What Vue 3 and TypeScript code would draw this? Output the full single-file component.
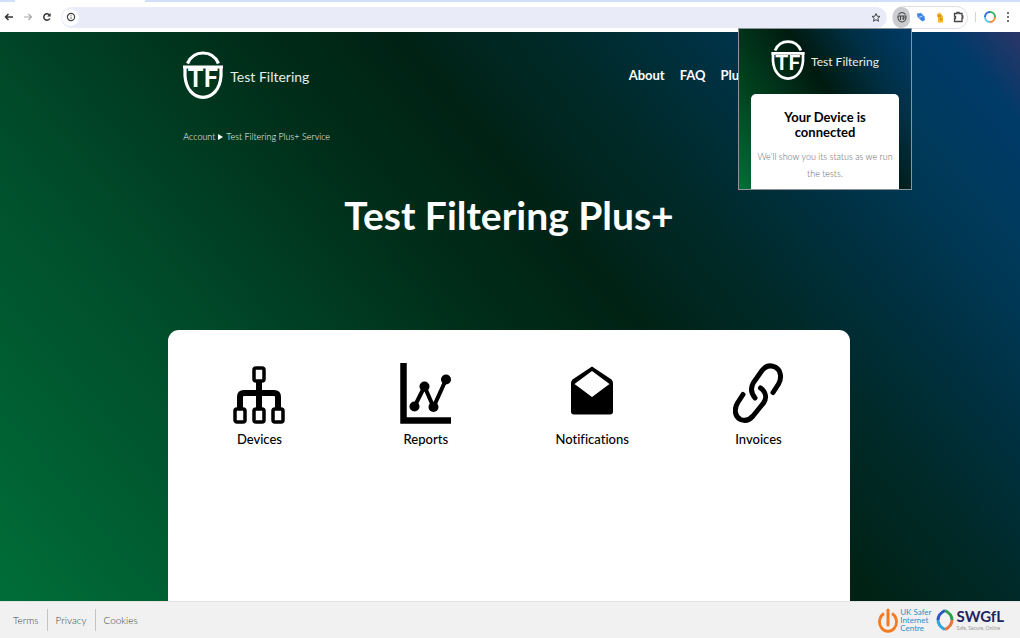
<script setup lang="ts">
interface Feature {
  id: 'devices' | 'reports' | 'notifications' | 'invoices'
  label: string
}

const navLinks: string[] = ['About', 'FAQ', 'Plus+']
const footerLinks: string[] = ['Terms', 'Privacy', 'Cookies']
const features: Feature[] = [
  { id: 'devices', label: 'Devices' },
  { id: 'reports', label: 'Reports' },
  { id: 'notifications', label: 'Notifications' },
  { id: 'invoices', label: 'Invoices' },
]
</script>

<template>
  <div class="window">
    <div class="chrome">
      <div class="tabstrip"><div class="tab"></div></div>
      <div class="toolbar">
        <button class="tool" aria-label="Back">
          <svg width="10" height="10" viewBox="0 0 10 10"><path d="M9 5H2M4.5 2 1.5 5l3 3" fill="none" stroke="#333" stroke-width="1.5" /></svg>
        </button>
        <button class="tool" aria-label="Forward">
          <svg width="10" height="10" viewBox="0 0 10 10"><path d="M1 5h7M5.500 2l3 3-3 3" fill="none" stroke="#aaa" stroke-width="1.2" /></svg>
        </button>
        <button class="tool" aria-label="Reload">
          <svg width="10" height="10" viewBox="0 0 10 10"><path d="M7.800 6.500A3.200 3.200 0 1 1 7.500 3" fill="none" stroke="#333" stroke-width="1.500" /><path d="M8.600 1v3.400H5.200z" fill="#333" /></svg>
        </button>
        <div class="omnibox">
          <button class="site" aria-label="Site information">
            <svg width="10" height="10" viewBox="0 0 10 10"><circle cx="5" cy="5" r="3.600" fill="none" stroke="#444" stroke-width="1.200" /><path d="M5 4.500v2.500M5 2.800v1" stroke="#777" stroke-width="1" /></svg>
          </button>
          <input class="address" type="text" aria-label="Address" />
          <button class="tool" aria-label="Bookmark">
            <svg width="10" height="11" viewBox="0 0 10 11"><path d="M5 1.500 6.100 4.200 9 4.400 6.800 6.300 7.500 9.300 5 7.700 2.500 9.300 3.200 6.300 1 4.400 3.900 4.200z" fill="none" stroke="#444" stroke-width="1" /></svg>
          </button>
        </div>
        <div class="extensions">
          <button class="ext active" aria-label="Test Filtering extension">
            <svg width="10" height="12" viewBox="0 0 10 12"><path d="M1.500 3.500Q5-.5 8.500 3.500M.5 5h9M1 5v2Q1.500 10.500 5 11 8.500 10.500 9 7V5M3.500 5v4M6.200 9V5M6.200 7h2" fill="none" stroke="#444" stroke-width="1.100" /></svg>
          </button>
          <button class="ext" aria-label="Tag extension">
            <svg width="10" height="10" viewBox="0 0 10 10"><path d="M1 1.500 5 1l3.500 3.500L9 8 6.500 9.500 4 7.500 1.500 5z" fill="#3d86e8" /><path d="M3 5.500 6.500 4" stroke="#bfd8fb" stroke-width="1" /></svg>
          </button>
          <button class="ext" aria-label="Yellow extension">
            <svg width="10" height="11" viewBox="0 0 10 11"><path d="M2 4V2l3-1.500L7 3l1 1v6.500H3V6z" fill="#f5b52c" /><path d="M3 4h3M5 7h2" stroke="#a8741a" stroke-width="1" /></svg>
          </button>
          <button class="ext" aria-label="Extensions">
            <svg width="11" height="12" viewBox="0 0 11 12"><path d="M1.500 2.500h2.500V1.500h2v1h3V5h.8v2H9v3.500H1.500V7.500h1v-2h-1z" fill="none" stroke="#444" stroke-width="1.300" /></svg>
          </button>
        </div>
        <span class="divider"></span>
        <button class="tool profile" aria-label="Profile">
          <svg width="14" height="14" viewBox="0 0 14 14"><g fill="none" stroke-width="2"><path d="M7 2A5 5 0 0 0 2 7" stroke="#2a6fd6" /><path d="M2 7a5 5 0 0 0 5 5" stroke="#55c8ea" /><path d="M7 12a5 5 0 0 0 5-5" stroke="#f08a3c" /><path d="M12 7A5 5 0 0 0 7 2" stroke="#37b35a" /></g></svg>
        </button>
        <button class="tool" aria-label="Menu">
          <svg width="4" height="12" viewBox="0 0 4 12" fill="#444"><circle cx="2" cy="2" r="1" /><circle cx="2" cy="6" r="1" /><circle cx="2" cy="10" r="1" /></svg>
        </button>
      </div>
    </div>

    <section class="popup" aria-label="Device status">
      <div class="popup-brand">
        <svg class="popup-mark" viewBox="0 0 40 48">
          <path d="M4.500 12.500Q9 2 20 2t15.500 10.500" fill="none" stroke="#fff" stroke-width="3.200" />
          <path d="M0 16h40M2 16v9C3 38 10 46 20 46.300 30 46 37 38 38 25V16" fill="none" stroke="#fff" stroke-width="3.200" />
          <text x="20" y="35.500" text-anchor="middle" class="monogram">TF</text>
        </svg>
        <span>Test Filtering</span>
      </div>
      <div class="popup-card">
        <h2>Your Device is connected</h2>
        <p>We'll show you its status as we run the tests.</p>
      </div>
    </section>

    <main class="page">
      <div class="container">
        <header class="header">
          <a class="brand" href="#">
            <svg class="mark" viewBox="0 0 40 48">
              <path d="M4.500 12.500Q9 2 20 2t15.500 10.500" fill="none" stroke="#fff" stroke-width="3.200" />
              <path d="M0 16h40M2 16v9C3 38 10 46 20 46.300 30 46 37 38 38 25V16" fill="none" stroke="#fff" stroke-width="3.200" />
              <text x="20" y="35.500" text-anchor="middle" class="monogram">TF</text>
            </svg>
            <span>Test Filtering</span>
          </a>
          <nav class="nav">
            <a v-for="link in navLinks" :key="link" href="#">{{ link }}</a>
          </nav>
        </header>
        <nav class="crumbs" aria-label="Breadcrumb">
          <a href="#">Account</a>
          <svg width="5" height="6" viewBox="0 0 5 6"><path d="M0 0 5 3 0 6z" fill="#fff" /></svg>
          <a href="#">Test Filtering Plus+ Service</a>
        </nav>
        <h1>Test Filtering Plus+</h1>
        <div class="card">
          <a v-for="f in features" :key="f.id" class="feature" href="#">
            <svg width="52" height="64" viewBox="0 0 52 64">
              <g v-if="f.id === 'devices'" fill="none" stroke="#000">
                <path d="M26 18v30M7 47V35q0-4 4-4h30q4 0 4 4v12" stroke-width="6" />
                <g fill="#fff" stroke-width="3.500">
                  <rect x="21" y="6" width="10" height="13" rx="2" />
                  <rect x="2" y="47" width="10" height="13" rx="2" />
                  <rect x="21" y="47" width="10" height="13" rx="2" />
                  <rect x="40" y="47" width="10" height="13" rx="2" />
                </g>
              </g>
              <g v-else-if="f.id === 'reports'">
                <path d="M3.500 1v57.500H51" fill="none" stroke="#000" stroke-width="6.500" />
                <path d="M14.500 44.500l10-20 9 20.500L46 17.500" fill="none" stroke="#000" stroke-width="4" />
                <circle cx="14.500" cy="44.500" r="5" /><circle cx="24.500" cy="24.500" r="5" />
                <circle cx="33.500" cy="45" r="5" /><circle cx="46" cy="17.500" r="5" />
              </g>
              <path v-else-if="f.id === 'notifications'" fill-rule="evenodd" d="M26 4.500 45.500 17.500Q47 19 47 21V49.500Q47 52.500 44 52.500H8Q5 52.500 5 49.500V21Q5 19 6.500 17.500zM26 9 8.500 22 26 35 43.500 22z" />
              <g v-else fill="none" stroke="#000" stroke-width="5" stroke-linecap="round">
                <path d="M40 30.500 45.500 22C49 16 48 8.500 42.500 5.200 37 2.500 32.500 4 29 8.500L20.500 20.500C17.500 25.500 18 31 22 36" />
                <path d="M10 32.500 4.500 41C1 47 1.500 54.500 7.500 57.500 12.500 59.500 16.500 58 20 54L30.500 41C34 36 33 30 27.500 26" />
              </g>
            </svg>
            <span>{{ f.label }}</span>
          </a>
        </div>
      </div>
    </main>

    <footer class="footer">
      <nav class="legal">
        <a v-for="link in footerLinks" :key="link" href="#">{{ link }}</a>
      </nav>
      <div class="partners">
        <a class="partner" href="#">
          <svg width="20" height="28" viewBox="0 0 20 28"><path d="M6 7.500A8.500 9.500 0 1 0 14 7.500" fill="none" stroke="#f47b20" stroke-width="2.800" /><path d="M10 4v15" stroke="#f47b20" stroke-width="3" stroke-linecap="round" /></svg>
          <span class="uksic">UK Safer<br />Internet<br />Centre</span>
        </a>
        <a class="partner" href="#">
          <svg width="18" height="24" viewBox="0 0 18 24"><g fill="none" stroke-width="3"><path d="M9 2.500Q2 6 2 12" stroke="#2a57c8" /><path d="M2 12q0 6 7 9.500" stroke="#2aa6e0" /><path d="M9 21.500q7-3.500 7-9.500" stroke="#e8763a" /><path d="M16 12q0-6-7-9.500" stroke="#2f9e54" /></g></svg>
          <span class="swgfl"><strong>SWGfL</strong><small>Safe, Secure, Online</small></span>
        </a>
      </div>
    </footer>
  </div>
</template>

<style>
body {
  margin: 0;
}
</style>

<style scoped>
.window {
  position: relative;
  display: flex;
  flex-direction: column;
  min-height: 100vh;
  font-family: Lato, "Noto Sans", sans-serif;
  font-variant-ligatures: none;
  color: #000;
}
a {
  color: inherit;
  text-decoration: none;
}
svg {
  display: block;
  flex: none;
}
button {
  border: 0;
  padding: 0;
  background: none;
}
.tabstrip {
  height: 2px;
  padding-left: 15px;
  background: #d0e0fb;
}
.tab {
  width: 130px;
  height: 2px;
  background: #fff;
}
.toolbar {
  display: flex;
  align-items: center;
  height: 30px;
  padding: 0 10px 0 4px;
  gap: 9px;
  background: #fff;
}
.omnibox {
  flex: 1;
  display: flex;
  align-items: center;
  height: 21px;
  padding: 0 6px 0 1px;
  border-radius: 11px;
  background: #e9ecf8;
}
.site {
  display: grid;
  place-items: center;
  width: 17px;
  height: 17px;
  border-radius: 50%;
  background: #fff;
}
.address {
  flex: 1;
  min-width: 0;
  border: 0;
  background: none;
}
.extensions {
  display: flex;
  align-items: center;
  gap: 2px;
  height: 21px;
  margin-left: -4px;
  border: 1px solid #dcdfe6;
  border-radius: 12px;
}
.ext {
  display: grid;
  place-items: center;
  width: 17px;
  height: 20px;
}
.active {
  height: 21px;
  border-radius: 9px;
  background: #cbcccf;
}
.divider {
  width: 1px;
  height: 10px;
  margin: 0 -2px;
  background: #c5d8f5;
}
.popup {
  position: absolute;
  top: 28px;
  right: 108px;
  display: flex;
  flex-direction: column;
  box-sizing: border-box;
  width: 174px;
  height: 162px;
  padding: 11px 12px 0;
  border: 1px solid #8c9498;
  background: linear-gradient(58deg, #007038 0%, #00431f 25%, #001a10 55%, #003046 78%, #003a68 100%);
}
.popup-brand {
  display: flex;
  align-items: center;
  justify-content: center;
  gap: 6px;
  margin-bottom: 14px;
  color: #e8eef0;
  font-size: 12px;
  line-height: 16px;
}
.popup-brand span {
  padding-top: 4px;
}
.popup-mark {
  width: 34px;
  height: 40px;
}
.monogram {
  font: 700 26px Lato, sans-serif;
  fill: #fff;
}
.popup-card {
  flex: 1;
  padding: 16px 6px 0;
  border-radius: 5px 5px 0 0;
  background: #fff;
  text-align: center;
}
.popup-card h2 {
  margin: 0 16px 8px;
  font-size: 13px;
  line-height: 15px;
  font-weight: 700;
}
.popup-card p {
  margin: 0;
  color: #666;
  font-size: 9px;
  line-height: 17px;
  font-weight: 300;
}
.page {
  flex: 1;
  display: flex;
  background: linear-gradient(50deg, #006e38 0%, #005c31 14%, #004e2b 26%, #003f24 36%, #002e1a 47%, #002214 58%, #002a2a 69%, #003348 80%, #003a5c 88%, #003a68 95%, #2b3668 100%);
}
.container {
  flex: 1;
  display: flex;
  flex-direction: column;
  margin: 0 16.700% 0 16.500%;
}
.header {
  display: flex;
  align-items: center;
  justify-content: space-between;
  padding: 19px 15px 0 15px;
}
.brand {
  display: flex;
  align-items: center;
  gap: 7px;
  padding: 0;
  color: #e8eeea;
  font-size: 14px;
  line-height: 20px;
}
.brand span {
  padding-top: 4px;
}
.mark {
  width: 40px;
  height: 48px;
}
.nav {
  display: flex;
  gap: 15px;
  width: 206px;
  color: #fff;
  font-size: 13px;
  line-height: 18px;
  font-weight: 700;
}
.crumbs {
  display: flex;
  align-items: center;
  gap: 3px;
  padding: 31px 15px 0;
  color: #fff;
  font-size: 9px;
  line-height: 14px;
  font-weight: 300;
}
h1 {
  margin: 45px 0 89px;
  color: #fff;
  font-size: 39px;
  line-height: 52px;
  font-weight: 700;
  text-align: center;
}
.card {
  flex: 1;
  display: grid;
  grid-template-columns: repeat(4, 1fr);
  align-items: start;
  padding: 32px 8px 0;
  border-radius: 11px 11px 0 0;
  background: #fff;
}
.feature {
  display: flex;
  flex-direction: column;
  align-items: center;
  gap: 4px;
  font-size: 13px;
  line-height: 18px;
  font-weight: 500;
}
.footer {
  display: flex;
  align-items: center;
  justify-content: space-between;
  min-height: 36px;
  padding: 0 16px 0 13px;
  border-top: 1px solid #e2e2e2;
  background: #f1f1f1;
}
.legal {
  display: flex;
  color: #444;
  font-size: 10px;
  line-height: 22px;
  font-weight: 300;
}
.legal a + a {
  margin-left: 8px;
  padding-left: 8px;
  border-left: 1px solid #c4c4c4;
}
.partners {
  display: flex;
  gap: 5px;
}
.partner {
  display: flex;
  align-items: center;
  gap: 2px;
}
.uksic {
  color: #2b8fc4;
  font-size: 8px;
  line-height: 8px;
}
.swgfl {
  display: flex;
  flex-direction: column;
  color: #20245f;
}
.swgfl strong {
  font-size: 15px;
  line-height: 17px;
}
.swgfl small {
  color: #999;
  font-size: 5px;
  line-height: 7px;
}
</style>
